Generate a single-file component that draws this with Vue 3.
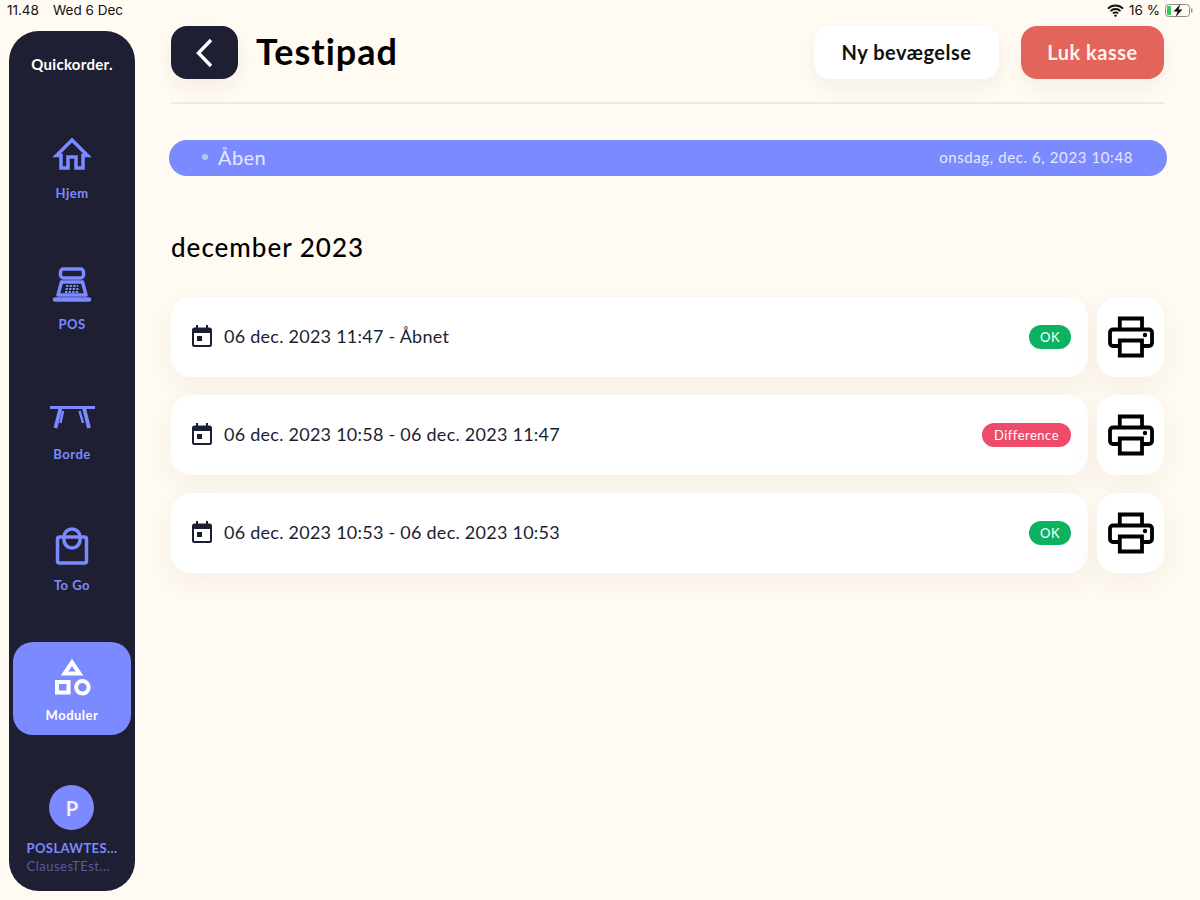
<template>
  <div class="page">
    <!-- iPad status bar -->
    <div class="status-bar">
      <div class="status-left"><span>11.48</span><span>Wed 6 Dec</span></div>
      <div class="status-right">
        <svg width="17" height="13" viewBox="0 0 17 13"><path d="M1 4.600a10.600 10.600 0 0 1 15 0M3.500 7.100a7 7 0 0 1 10 0M6 9.500a3.400 3.400 0 0 1 5 0" fill="none" stroke="#111" stroke-width="1.900"/><path d="M8.500 10.200l1.600 1.600-1.600 1.200-1.600-1.200z" fill="#111"/></svg>
        <span>16 %</span>
        <svg width="28" height="13" viewBox="0 0 28 13"><rect x=".5" y=".5" width="24" height="12" rx="3" fill="none" stroke="#8e8e8a"/><rect x="2" y="2" width="4" height="9" rx="1" fill="#35c759"/><path d="M15.500 0L8.500 7.500h4L10.500 13l7-7.600h-4z" fill="#111"/><rect x="26" y="4.500" width="1.400" height="4" fill="#8e8e8a"/></svg>
      </div>
    </div>

    <div class="layout">
      <aside class="sidebar">
        <div class="logo">Quickorder.</div>
        <nav class="nav">
          <div v-for="item in navItems" :key="item.label" class="nav-item" :class="{ active: item.active }">
            <svg class="nav-icon" viewBox="0 0 40 40" fill="none" stroke="currentColor" stroke-width="3.500" v-html="item.icon"></svg>
            <span>{{ item.label }}</span>
          </div>
        </nav>
        <div class="user">
          <div class="avatar">P</div>
          <div class="user-name">POSLAWTES...</div>
          <div class="user-sub">ClausesTEst...</div>
        </div>
      </aside>

      <main class="main">
        <header class="header">
          <button class="back-btn">
            <svg width="20" height="32" viewBox="0 0 20 32"><path d="M16 3L3.500 16 16 29" fill="none" stroke="#fff" stroke-width="3.400"/></svg>
          </button>
          <h1>Testipad</h1>
          <button class="btn btn-white">Ny bevægelse</button>
          <button class="btn btn-red">Luk kasse</button>
        </header>

        <div class="open-bar">
          <span class="dot"></span>
          <span class="open-label">Åben</span>
          <span class="open-date">onsdag, dec. 6, 2023 10:48</span>
        </div>

        <h2>december 2023</h2>

        <div class="rows">
          <div v-for="row in rows" :key="row.text" class="row">
            <div class="row-card">
              <svg class="cal" width="24" height="24" viewBox="0 0 24 24" fill="#1c1e33"><path d="M6 1h2v2.500h8V1h2v2.500h1.500A2.500 2.500 0 0 1 22 6v14.500a2.500 2.500 0 0 1-2.500 2.500h-15A2.500 2.500 0 0 1 2 20.500V6a2.500 2.500 0 0 1 2.500-2.500H6zM4 9v11.500c0 .3.200.5.5.5h15c.3 0 .5-.2.500-.5V9z"/><rect x="7" y="12" width="5" height="5"/></svg>
              <span class="row-text">{{ row.text }}</span>
              <span class="badge" :class="row.ok ? 'ok' : 'diff'">{{ row.ok ? 'OK' : 'Difference' }}</span>
            </div>
            <div class="print-card">
              <svg width="46" height="42" viewBox="0 0 46 42" fill="none" stroke="#000" stroke-width="3.800">
                <path d="M11.800 13.500V2.500H34v11"/>
                <path d="M11.800 30H5a3 3 0 0 1-3-3V16.500a3 3 0 0 1 3-3h36a3 3 0 0 1 3 3V27a3 3 0 0 1-3 3h-7"/>
                <path d="M11.800 24.500H34V39.500H11.800z"/>
                <circle cx="37" cy="19" r="2.200" fill="#000" stroke="none"/>
              </svg>
            </div>
          </div>
        </div>
      </main>
    </div>
  </div>
</template>

<script setup>
const navItems = [
  {
    label: 'Hjem',
    icon: '<path d="M20 4L4.500 19.500H9V32H16V21H24V32H31V19.500H35.500Z" stroke-linejoin="miter"/>'
  },
  {
    label: 'POS',
    icon: '<rect x="8.500" y="2" width="23" height="9" rx="3"/><path d="M9.500 15h21l3.500 13H6z" stroke-linejoin="round"/><path d="M3 32.500h34" stroke-width="4.500" stroke-linecap="round"/><path d="M14 19h12M13.500 22h13M13 25h14" stroke-width="1.800" stroke-dasharray="2.400 1.200"/>'
  },
  {
    label: 'Borde',
    icon: '<path d="M-2 10.500H43" stroke-width="3.200"/><path d="M8.500 11L3.500 31M32 11L37 31" stroke-width="3.800"/><path d="M11 14L8.500 26M27.500 14L31 26" stroke-width="2.400"/>'
  },
  {
    label: 'To Go',
    icon: '<rect x="5.500" y="9" width="29" height="26" rx="2"/><path d="M12 9a8 8 0 0 1 16 0M12 9v3a8 8 0 0 0 16 0V9"/>'
  },
  {
    label: 'Moduler',
    active: true,
    icon: '<path d="M20 4.500L27.500 15.500H12.500Z" stroke-width="4"/><rect x="5" y="24" width="11.500" height="10.500" stroke-width="4"/><circle cx="30.400" cy="29.300" r="6.300" stroke-width="4"/>'
  }
]

const rows = [
  { text: '06 dec. 2023 11:47 - Åbnet', ok: true },
  { text: '06 dec. 2023 10:58 - 06 dec. 2023 11:47', ok: false },
  { text: '06 dec. 2023 10:53 - 06 dec. 2023 10:53', ok: true }
]
</script>

<style>
body {
  margin: 0;
  background: #fffaf2;
}
</style>

<style scoped>
.page {
  width: 1200px;
  height: 900px;
  overflow: hidden;
  background: #fffaf2;
  font-family: "Lato", "Noto Sans", sans-serif;
  color: #000;
}

.status-bar {
  height: 20px;
  padding: 0 7px 2px 7px;
  display: flex;
  justify-content: space-between;
  align-items: center;
  font-family: "Inter", sans-serif;
  font-size: 13.500px;
  color: #111;
}

.status-left {
  display: flex;
  gap: 14px;
}

.status-right {
  display: flex;
  align-items: center;
  gap: 5px;
}

.layout {
  display: flex;
  padding: 9px 0 0 9px;
}

.sidebar {
  width: 126px;
  height: 860px;
  box-sizing: border-box;
  background: #1e1f33;
  border-radius: 30px;
  display: flex;
  flex-direction: column;
  align-items: center;
  color: #7c8aff;
}

.logo {
  margin-top: 24px;
  color: #fff;
  font-size: 15px;
  font-weight: 700;
  letter-spacing: 0.3px;
  line-height: 18px;
}

.nav {
  margin-top: 47px;
  display: flex;
  flex-direction: column;
  gap: 37.500px;
}

.nav-item {
  width: 118px;
  height: 93px;
  border-radius: 20px;
  display: flex;
  flex-direction: column;
  align-items: center;
  font-size: 13px;
  font-weight: 700;
  letter-spacing: 0.5px;
  padding-top: 16px;
  box-sizing: border-box;
}

.nav-icon {
  width: 40px;
  height: 40px;
  margin-bottom: 9px;
  overflow: visible;
}

.nav-item.active {
  background: #7c8aff;
  color: #fff;
}

.user {
  margin-top: 50px;
  display: flex;
  flex-direction: column;
  align-items: center;
}

.avatar {
  width: 45px;
  height: 45px;
  border-radius: 50%;
  background: #7c8aff;
  color: #f2f0f5;
  font-size: 20px;
  font-weight: 700;
  display: flex;
  align-items: center;
  justify-content: center;
  margin-bottom: 9px;
}

.user-name {
  font-size: 13px;
  font-weight: 700;
  letter-spacing: 0.4px;
  line-height: 18px;
}

.user-sub {
  align-self: flex-start;
  font-size: 13px;
  color: #565c9c;
  letter-spacing: 0.5px;
  line-height: 18px;
}

.main {
  margin-left: 36px;
  width: 993px;
  margin-top: -5px;
}

.header {
  display: flex;
  align-items: center;
  height: 53px;
  padding-bottom: 23px;
  border-bottom: 2px solid #eee9de;
}

.back-btn {
  width: 67px;
  height: 53px;
  border: 0;
  border-radius: 16px;
  background: #1e1f33;
  display: flex;
  align-items: center;
  justify-content: center;
  box-shadow: 0 8px 20px rgba(60, 40, 10, 0.06);
}

h1 {
  margin: 0 auto 3px 18px;
  font-size: 36px;
  font-weight: 700;
  letter-spacing: 1px;
}

.btn {
  height: 53px;
  padding: 0 0 2px;
  border: 0;
  border-radius: 16px;
  font-family: inherit;
  font-size: 20px;
  font-weight: 700;
  letter-spacing: 0.5px;
  box-shadow: 0 8px 20px rgba(60, 40, 10, 0.05);
}

.btn-white {
  width: 185px;
  background: #fff;
  color: #111;
  margin-right: 22px;
}

.btn-red {
  width: 143px;
  background: #e2645a;
  color: #fff3ea;
}

.open-bar {
  width: 998px;
  height: 36px;
  margin: 36px 0 0 -2px;
  border-radius: 18px;
  background: #7c8aff;
  display: flex;
  align-items: center;
  color: #e6e8ff;
  padding: 0 34px 2px 33px;
  box-sizing: border-box;
}

.dot {
  width: 6px;
  height: 6px;
  border-radius: 50%;
  background: #b9c1ff;
  margin-right: 10px;
}

.open-label {
  font-size: 20px;
  letter-spacing: 0.4px;
}

.open-date {
  margin-left: auto;
  font-size: 15px;
  letter-spacing: 0.6px;
}

h2 {
  margin: 53px 0 0;
  font-size: 26px;
  line-height: 36px;
  font-weight: 500;
  letter-spacing: 1px;
}

.rows {
  margin-top: 32px;
  display: flex;
  flex-direction: column;
  gap: 18px;
}

.row {
  display: flex;
  gap: 9px;
}

.row-card {
  width: 918px;
  height: 80px;
  box-sizing: border-box;
  padding: 0 17px 0 19px;
  border-radius: 20px;
  background: #fff;
  display: flex;
  align-items: center;
  box-shadow: 0 10px 30px rgba(90, 60, 20, 0.055);
}

.cal {
  margin: 0 10px 2px 0;
}

.row-text {
  margin-bottom: 2px;
  font-size: 18px;
  font-weight: 400;
  letter-spacing: 0.25px;
  color: #1c1e33;
}

.badge {
  margin-left: auto;
  height: 24px;
  line-height: 24px;
  border-radius: 12px;
  padding: 0 12px;
  font-size: 13px;
  letter-spacing: 0.5px;
  color: #fff;
}

.badge.ok {
  padding: 0 11px;
  background: #0cb25f;
}

.badge.diff {
  background: #ee4b6a;
}

.print-card {
  width: 67px;
  height: 80px;
  border-radius: 20px;
  background: #fff;
  display: flex;
  align-items: center;
  justify-content: center;
  box-shadow: 0 10px 30px rgba(90, 60, 20, 0.055);
}
</style>
